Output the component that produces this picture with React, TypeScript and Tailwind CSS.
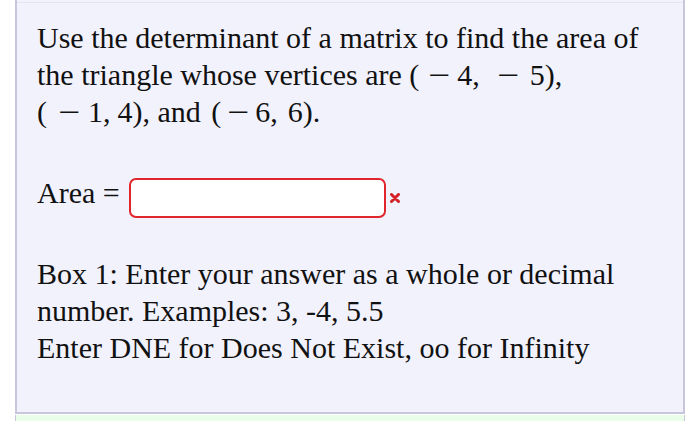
import React from "react";

function Minus({ className }: { className: string }) {
  return <span className={"inline-block scale-x-[1.3] " + className}>−</span>;
}

export default function App() {
  const serif = { fontFamily: '"Liberation Serif", "Times New Roman", serif' };
  return (
    <div className="w-[700px] h-[421px] bg-white overflow-hidden" style={serif}>
      <div className="ml-[15px] w-[670px] h-[414px] bg-[#f2f2fd] border-x-2 border-b-2 border-[#c6c6dc] flex flex-col">
        <div className="mt-[2px] h-px bg-[#e4e4f2]" />
        <div className="pl-[20px] pt-[16px] text-[30px] leading-[37px] text-[#111] whitespace-nowrap">
          <div>Use the determinant of a matrix to find the area of</div>
          <div>
            the triangle whose vertices are <span>(</span>
            <Minus className="ml-[12px]" />
            <span className="ml-[9px]">4,</span>
            <Minus className="ml-[20px]" />
            <span className="ml-[13px]">5),</span>
          </div>
          <div>
            <span>(</span>
            <Minus className="ml-[14px]" />
            <span className="ml-[10px]">1,</span>
            <span className="ml-[7px]">4),</span> and <span className="ml-[3px]">(</span>
            <Minus className="ml-[9px]" />
            <span className="ml-[8px]">6,</span>
            <span className="ml-[10px]">6).</span>
          </div>
        </div>
        <div className="pl-[20px] mt-[43px] flex items-start text-[30px] leading-[40px] text-[#111]">
          <span className="mr-[9px]">Area =</span>
          <div className="mt-[5px] w-[257px] h-[40px] rounded-[7px] border-2 border-[#e0262c] bg-white" />
          <svg width="10" height="10" viewBox="0 0 10 10" className="ml-[4px] mt-[20px]">
            <path d="M1.5 1.5 L8.5 8.5 M8.5 1.5 L1.5 8.5" stroke="#d42027" strokeWidth="3" strokeLinecap="round" />
          </svg>
        </div>
        <div className="pl-[20px] mt-[37px] text-[30px] leading-[37px] text-[#111]">
          <div>Box 1: Enter your answer as a whole or decimal</div>
          <div>number. Examples: 3, -4, 5.5</div>
          <div>Enter DNE for Does Not Exist, oo for Infinity</div>
        </div>
      </div>
      <div className="ml-[15px] w-[670px] h-[7px] mt-px bg-[#e9fde9] border-x border-[#c6c6dc]" />
    </div>
  );
}
